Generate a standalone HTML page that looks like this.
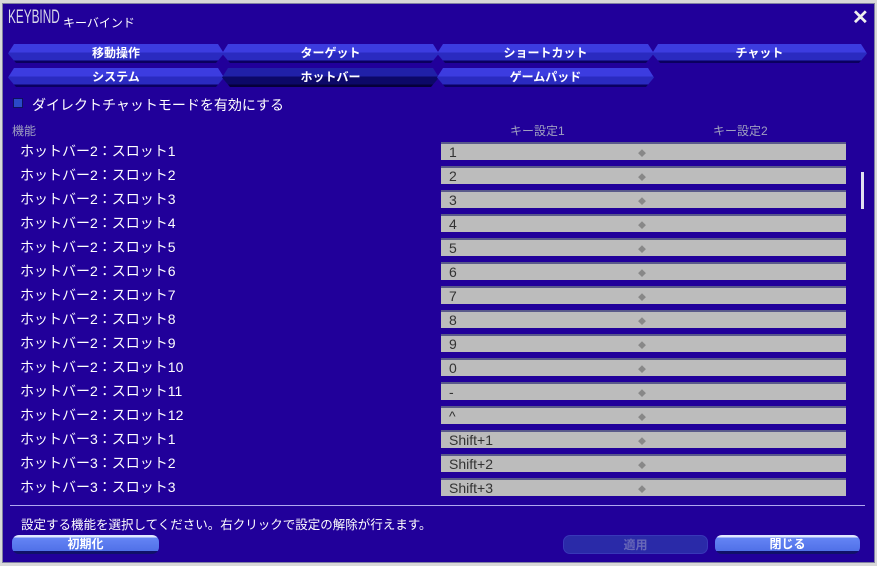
<!DOCTYPE html><html><head><meta charset="utf-8"><style>
*{margin:0;padding:0;box-sizing:border-box}
body{width:877px;height:566px;background:#d8d8d8;font-family:"Liberation Sans","Noto Sans CJK JP",sans-serif;overflow:hidden;position:relative}
.win{position:absolute;left:2px;top:3px;width:873px;height:560px;background:#21009a;border:1px solid #8080a0}
.a{position:absolute;white-space:nowrap}
.tab{position:absolute;height:19px;color:#fff;font-size:12px;font-weight:bold;text-align:center;line-height:18px;
clip-path:polygon(6px 0,calc(100% - 6px) 0,100% 50%,calc(100% - 8px) 100%,8px 100%,0 50%);
background:linear-gradient(#3c3ce0 0,#3c3ce0 45%,#2a2ac0 45%,#2a2ac0 88%,#0a0060 88%)}
.tab.act{background:linear-gradient(#2020a8 0,#2020a8 45%,#0c0868 45%,#0c0868 88%,#05003a 88%)}
.lbl{position:absolute;left:20px;color:#fff;font-size:14px}
.key{position:absolute;left:441px;width:405px;height:18px;background:#bcbcbc;border-top:2px solid #5a5a8a;color:#333;font-size:14px;line-height:16px;padding-left:8px}
.key::after{content:"◆";position:absolute;left:197px;top:2px;font-size:8px;color:#888}
.btn{position:absolute;height:19px;color:#fff;font-size:12px;font-weight:bold;text-align:center;line-height:19px;border-radius:7px;
background:linear-gradient(#e0e8ff 0,#e0e8ff 12%,#6585f5 12%,#5070e8 85%,#10106a 85%)}
</style></head><body><div class="win"></div>
<div class="a" style="left:8px;top:7px;color:#d8d8e8;font-size:19px;transform:scaleX(0.62);transform-origin:left">KEYBIND</div>
<div class="a" style="left:63px;top:14px;color:#fff;font-size:12px">キーバインド</div>
<div class="a" style="left:852px;top:5px;color:#eee;font-size:20px;font-weight:bold">✕</div>
<div class="tab" style="left:8px;top:44px;width:216px">移動操作</div>
<div class="tab" style="left:222px;top:44px;width:217px">ターゲット</div>
<div class="tab" style="left:437px;top:44px;width:217px">ショートカット</div>
<div class="tab" style="left:652px;top:44px;width:215px">チャット</div>
<div class="tab" style="left:8px;top:68px;width:216px">システム</div>
<div class="tab act" style="left:222px;top:68px;width:217px">ホットバー</div>
<div class="tab" style="left:437px;top:68px;width:217px">ゲームパッド</div>
<div class="a" style="left:13px;top:98px;width:10px;height:10px;background:#2a4ac8;border:1px solid #101060"></div>
<div class="a" style="left:32px;top:95px;color:#fff;font-size:14px">ダイレクトチャットモードを有効にする</div>
<div class="a" style="left:12px;top:122px;color:#a0a0c0;font-size:12px">機能</div>
<div class="a" style="left:510px;top:122px;color:#a0a0c0;font-size:12px">キー設定1</div>
<div class="a" style="left:713px;top:122px;color:#a0a0c0;font-size:12px">キー設定2</div>
<div class="a" style="left:861px;top:172px;width:3px;height:37px;background:#e0e0f0"></div>
<div class="lbl" style="top:141px">ホットバー2：スロット1</div><div class="key" style="top:142px">1</div>
<div class="lbl" style="top:165px">ホットバー2：スロット2</div><div class="key" style="top:166px">2</div>
<div class="lbl" style="top:189px">ホットバー2：スロット3</div><div class="key" style="top:190px">3</div>
<div class="lbl" style="top:213px">ホットバー2：スロット4</div><div class="key" style="top:214px">4</div>
<div class="lbl" style="top:237px">ホットバー2：スロット5</div><div class="key" style="top:238px">5</div>
<div class="lbl" style="top:261px">ホットバー2：スロット6</div><div class="key" style="top:262px">6</div>
<div class="lbl" style="top:285px">ホットバー2：スロット7</div><div class="key" style="top:286px">7</div>
<div class="lbl" style="top:309px">ホットバー2：スロット8</div><div class="key" style="top:310px">8</div>
<div class="lbl" style="top:333px">ホットバー2：スロット9</div><div class="key" style="top:334px">9</div>
<div class="lbl" style="top:357px">ホットバー2：スロット10</div><div class="key" style="top:358px">0</div>
<div class="lbl" style="top:381px">ホットバー2：スロット11</div><div class="key" style="top:382px">-</div>
<div class="lbl" style="top:405px">ホットバー2：スロット12</div><div class="key" style="top:406px">^</div>
<div class="lbl" style="top:429px">ホットバー3：スロット1</div><div class="key" style="top:430px">Shift+1</div>
<div class="lbl" style="top:453px">ホットバー3：スロット2</div><div class="key" style="top:454px">Shift+2</div>
<div class="lbl" style="top:477px">ホットバー3：スロット3</div><div class="key" style="top:478px">Shift+3</div>
<div class="a" style="left:10px;top:505px;width:855px;height:1px;background:#b0a8f0"></div>
<div class="a" style="left:21px;top:514px;color:#fff;font-size:12.5px">設定する機能を選択してください。右クリックで設定の解除が行えます。</div>
<div class="btn" style="left:12px;top:535px;width:147px">初期化</div>
<div class="btn" style="left:563px;top:535px;width:145px;background:#2a2aa8;color:#6868b8;border:1px solid #3838b8">適用</div>
<div class="btn" style="left:715px;top:535px;width:145px">閉じる</div>
</body></html>
